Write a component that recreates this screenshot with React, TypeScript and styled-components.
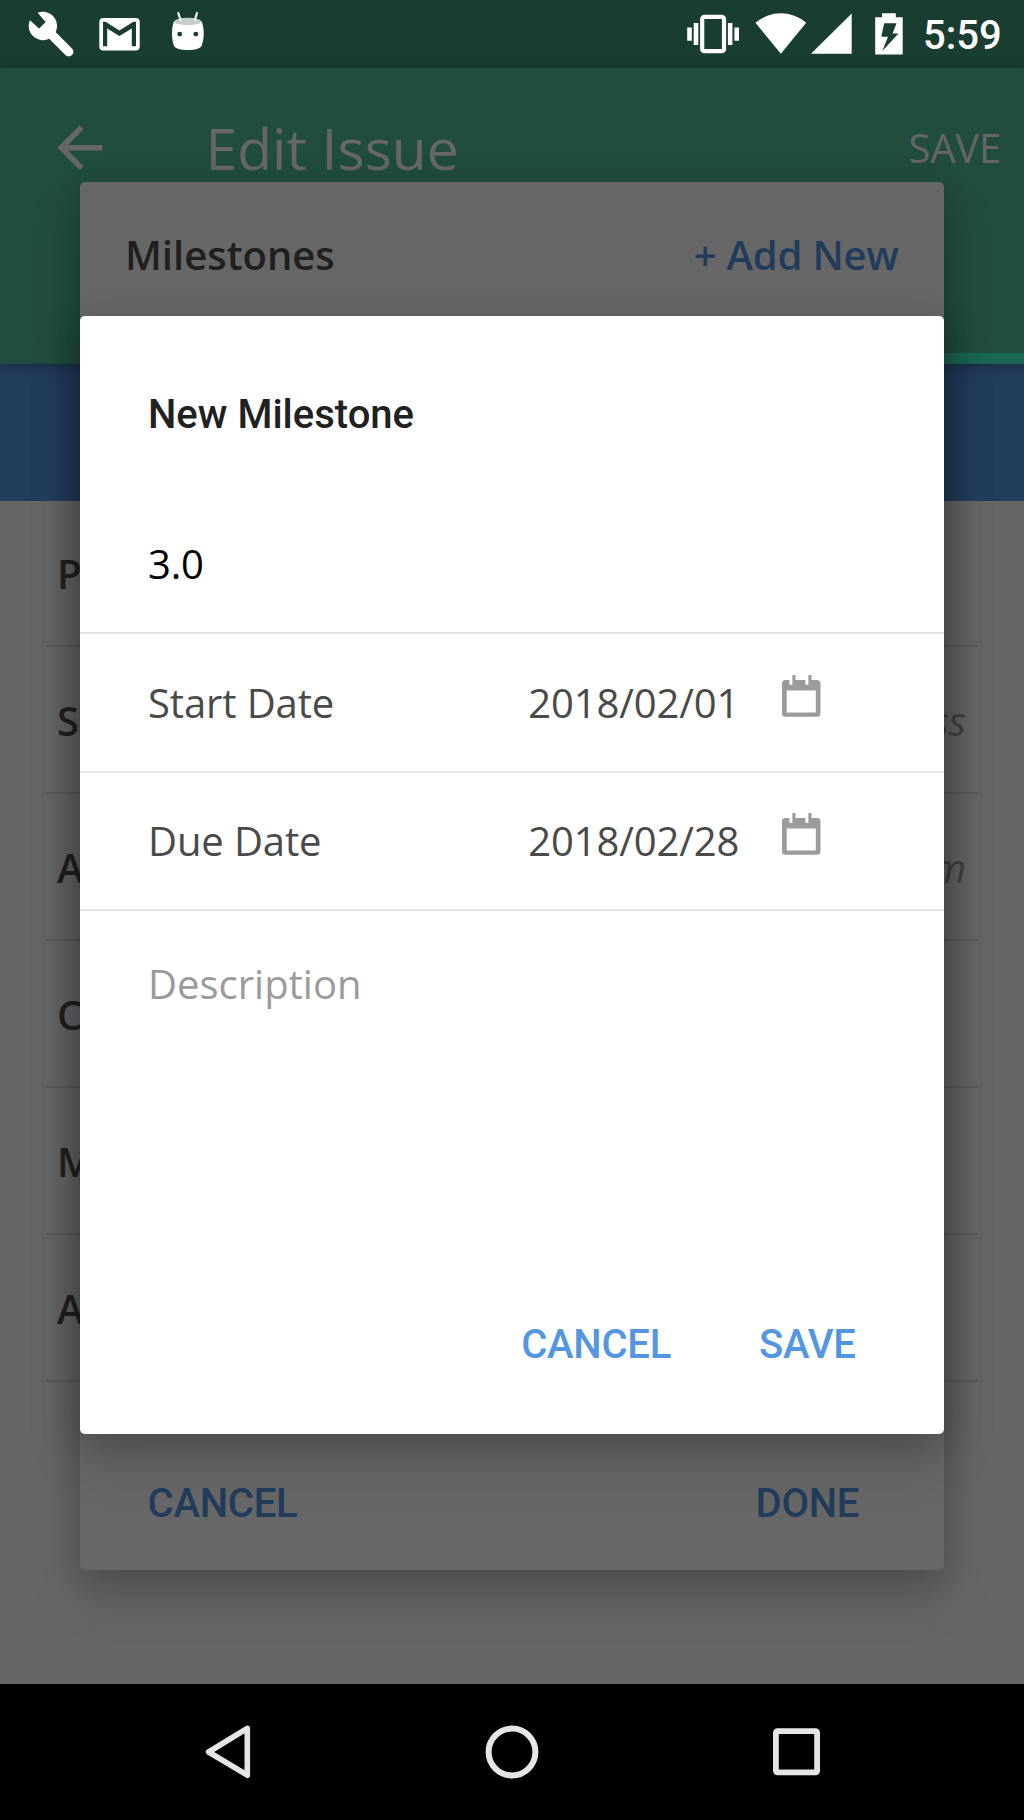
import React from "react";
import styled, { createGlobalStyle } from "styled-components";

const GlobalStyle = createGlobalStyle`
  *, *::before, *::after { box-sizing: border-box; }
  body { margin: 0; background: #000; }
`;

const c = {
  status: "#1a3d32",
  green: "#214d3f",
  accent: "#1a6753",
  band: "#233d5d",
  dim: "#666666",
  dimInk: "#202020",
  dimBlue: "#223c5c",
  ink: "#212121",
  label: "#4a4a4a",
  muted: "#9b9b9b",
  rule: "#e5e5e5",
  link: "#5596e3",
};

const sans = `"Open Sans", "Noto Sans", sans-serif`;
const roboto = `Roboto, "Noto Sans", sans-serif`;

const Screen = styled.div`
  position: relative;
  display: flex;
  flex-direction: column;
  width: 1024px;
  height: 1820px;
  overflow: hidden;
  background: ${c.dim};
  font-family: ${sans};
  font-size: 40px;
  line-height: 54px;
  white-space: nowrap;
`;

const Glyph = styled.svg<{ $gap?: number }>`
  display: block;
  flex: none;
  margin-left: ${(p) => p.$gap ?? 0}px;
`;

const StatusBar = styled.header`
  display: flex;
  justify-content: space-between;
  height: 68px;
  flex: none;
  background: ${c.status};
`;

const StatusGroup = styled.div`
  display: flex;
  align-items: flex-start;
`;

const Clock = styled.time`
  width: 101px;
  margin-left: 17px;
  padding-top: 9px;
  color: #fff;
  font-family: ${roboto};
  font-weight: 500;
`;

const Header = styled.div`
  position: relative;
  display: flex;
  flex-direction: column;
  justify-content: space-between;
  height: 296px;
  flex: none;
  background: ${c.green};
  box-shadow: 0 2px 11px rgba(0, 0, 0, 0.3);
`;

const AppBar = styled.div`
  display: flex;
  align-items: center;
  height: 159px;
  padding: 0 23px 0 46px;
  color: #676767;
`;

const Title = styled.h1`
  flex: 1;
  margin: 0 0 0 92px;
  font-size: 57px;
  font-weight: 400;
  line-height: 78px;
`;

const BarAction = styled.span`
  color: #656565;
  letter-spacing: -0.2px;
`;

const TabIndicator = styled.div`
  align-self: flex-end;
  width: 50%;
  height: 11px;
  background: ${c.accent};
`;

const Band = styled.div`
  height: 137px;
  flex: none;
  background: ${c.band};
`;

const FieldList = styled.ul`
  flex: 1;
  margin: -1px 46px 0;
  padding: 0;
  list-style: none;
`;

const FieldItem = styled.li`
  display: flex;
  align-items: center;
  justify-content: space-between;
  height: 147px;
  padding: 2px 12px 0 11px;
  border-bottom: 2px solid #5b5b5b;
`;

const FieldName = styled.span`
  color: #222;
  font-weight: 600;
`;

const FieldValue = styled.em`
  color: #424242;
`;

const NavBar = styled.nav`
  position: relative;
  z-index: 3;
  display: flex;
  align-items: center;
  justify-content: center;
  gap: 230px;
  height: 136px;
  flex: none;
  background: #000;
`;

const Sheet = styled.section<{ $top: number; $height: number; $front?: boolean }>`
  position: absolute;
  z-index: ${(p) => (p.$front ? 2 : 1)};
  top: ${(p) => p.$top}px;
  left: 79.6px;
  display: flex;
  flex-direction: column;
  width: 864.6px;
  height: ${(p) => p.$height}px;
  border-radius: 5px;
  background: ${(p) => (p.$front ? "#fff" : "#676767")};
  box-shadow: 0 24px 50px rgba(0, 0, 0, 0.22), 0 2px 28px rgba(0, 0, 0, 0.1);
`;

const SheetHeader = styled.div`
  display: flex;
  align-items: center;
  justify-content: space-between;
  height: 146px;
  padding: 0 45.4px;
  font-weight: 600;
`;

const SheetTitle = styled.span`
  color: ${c.dimInk};
`;

const AddNew = styled.span`
  color: ${c.dimBlue};
  letter-spacing: -0.2px;
`;

const SheetFooter = styled.div`
  display: flex;
  align-items: center;
  justify-content: space-between;
  height: 132px;
  margin-top: auto;
  padding: 0 85px 0 68px;
`;

const TextButton = styled.button<{ $dim?: boolean }>`
  padding: 0;
  border: 0;
  background: none;
  color: ${(p) => (p.$dim ? c.dimBlue : c.link)};
  font: 500 40px/54px ${roboto};
  letter-spacing: -0.25px;
`;

const DialogTitle = styled.h2`
  display: flex;
  align-items: center;
  height: 196px;
  margin: 0;
  padding: 2px 0 0 68.4px;
  color: ${c.ink};
  font: 500 40px/54px ${roboto};
`;

const DialogRow = styled.div<{ $height: number; $lift?: number }>`
  display: flex;
  align-items: center;
  height: ${(p) => p.$height}px;
  padding: 0 123px ${(p) => p.$lift ?? 0}px 68.4px;
  border-bottom: 2px solid ${c.rule};
  color: ${c.label};
  letter-spacing: -0.12px;
`;

const NameValue = styled.span`
  color: #000;
`;

const RowLabel = styled.span`
  flex: 1;
`;

const DateValue = styled.span`
  width: 254px;
`;

const CalendarSlot = styled.span`
  padding-bottom: 13px;
`;

const Description = styled.div`
  flex: 1;
  padding: 46px 68.4px 0;
  color: ${c.muted};
`;

const DialogActions = styled.div`
  display: flex;
  align-items: center;
  justify-content: flex-end;
  gap: 88px;
  height: 178px;
  padding-right: 88.6px;
`;

const CalendarIcon = () => (
  <CalendarSlot>
    <Glyph width="39" height="43" viewBox="0 0 39 43">
      <path
        fill={c.muted}
        fillRule="evenodd"
        d="M3.5 5H7.4V9.7H10.4V0H13.5V5H23.4V9.7H26.4V0H29.5V5H35A3.5 3.5 0 0 1 38.5 8.5V38.2A3.5 3.5 0 0 1 35 41.7H3.5A3.5 3.5 0 0 1 0 38.2V8.5A3.5 3.5 0 0 1 3.5 5ZM4.7 15.4V37.4H33.8V15.4Z"
      />
    </Glyph>
  </CalendarSlot>
);

const fields: { name: string; value?: string }[] = [
  { name: "P" },
  { name: "S", value: "ss" },
  { name: "A", value: "m" },
  { name: "C" },
  { name: "M" },
  { name: "A" },
];

const dates = [
  { label: "Start Date", value: "2018/02/01", height: 139 },
  { label: "Due Date", value: "2018/02/28", height: 138 },
];

export default function App() {
  return (
    <>
      <GlobalStyle />
      <Screen>
        <StatusBar>
          <StatusGroup>
            <Glyph $gap={28} width="48" height="68" viewBox="28 0 48 68">
              <path d="M48 31L68.7 51.7" stroke="#fff" strokeWidth="9.4" strokeLinecap="round" />
              <path d="M37.6 12.8A14.2 14.2 0 1 1 29.9 20.2L39.1 28.4L45.7 22.1Z" fill="#fff" />
            </Glyph>
            <Glyph $gap={22} width="44" height="68" viewBox="98 0 44 68">
              <rect x="99.3" y="18" width="40.4" height="32.6" rx="4" fill="#fff" />
              <path d="M103 46.3V21.7H105.6L119.4 30.6L133.4 21.7H136V46.3H131.8V28.5L119.4 36L107.2 28.5V46.3Z" fill={c.status} />
            </Glyph>
            <Glyph $gap={28} width="36" height="68" viewBox="170 0 36 68">
              <path d="M173.8 21.5C171.4 29 171.4 38 173.8 45.5C175.5 51.6 200 51.6 201.8 45.5C204.4 38 204.4 29 201.8 21.5Z" fill="#fff" />
              <ellipse cx="187.8" cy="21.5" rx="13.6" ry="3.7" fill="#c4cfcc" />
              <path d="M178.3 13L180.6 20M197 13L194.8 20" stroke="#f2f5f4" strokeWidth="2.2" strokeLinecap="round" />
              <circle cx="179.7" cy="34.1" r="2.4" fill={c.status} />
              <circle cx="195.8" cy="34.1" r="2.4" fill={c.status} />
            </Glyph>
          </StatusGroup>
          <StatusGroup>
            <Glyph width="54" height="68" viewBox="686 0 54 68">
              <rect x="702.2" y="16.8" width="21.8" height="34.3" rx="2.2" fill="none" stroke="#fff" strokeWidth="4.2" />
              <path d="M693.7 23H698.3V45H693.7ZM687.2 27.4H691.8V40.8H687.2ZM727.9 23H732.4V45H727.9ZM734.4 27.4H739V40.8H734.4Z" fill="#fff" />
            </Glyph>
            <Glyph $gap={14} width="54" height="68" viewBox="754 0 54 68">
              <path d="M755.5 22.8A38.6 38.6 0 0 1 806.2 22.8L780.8 53.8Z" fill="#fff" />
            </Glyph>
            <Glyph $gap={2} width="44" height="68" viewBox="810 0 44 68">
              <path d="M811 53.8L851.7 13.5V53.8Z" fill="#fff" />
            </Glyph>
            <Glyph $gap={20} width="32" height="68" viewBox="874 0 32 68">
              <path d="M882 13.2H895.8V17.2H902.7V54.6H875.2V17.2H882Z" fill="#fff" />
              <path d="M884.2 23.2H896.5L892.6 33.4H898.5L882.3 51L888 36.8H881.3Z" fill={c.status} />
            </Glyph>
            <Clock>5:59</Clock>
          </StatusGroup>
        </StatusBar>

        <Header>
          <AppBar>
            <Glyph width="67.5" height="67.5" viewBox="0 0 24 24">
              <path fill="currentColor" d="M20 11H7.83l5.59-5.59L12 4l-8 8 8 8 1.41-1.41L7.83 13H20v-2z" />
            </Glyph>
            <Title>Edit Issue</Title>
            <BarAction>SAVE</BarAction>
          </AppBar>
          <TabIndicator />
        </Header>
        <Band />

        <FieldList>
          {fields.map((f, i) => (
            <FieldItem key={i}>
              <FieldName>{f.name}</FieldName>
              {f.value && <FieldValue>{f.value}</FieldValue>}
            </FieldItem>
          ))}
        </FieldList>

        <Sheet $top={182} $height={1388}>
          <SheetHeader>
            <SheetTitle>Milestones</SheetTitle>
            <AddNew>+ Add New</AddNew>
          </SheetHeader>
          <SheetFooter>
            <TextButton $dim>CANCEL</TextButton>
            <TextButton $dim>DONE</TextButton>
          </SheetFooter>
        </Sheet>

        <Sheet $top={316.4} $height={1117.8} $front>
          <DialogTitle>New Milestone</DialogTitle>
          <DialogRow $height={122} $lift={16}>
            <NameValue>3.0</NameValue>
          </DialogRow>
          {dates.map((d) => (
            <DialogRow key={d.label} $height={d.height}>
              <RowLabel>{d.label}</RowLabel>
              <DateValue>{d.value}</DateValue>
              <CalendarIcon />
            </DialogRow>
          ))}
          <Description>Description</Description>
          <DialogActions>
            <TextButton>CANCEL</TextButton>
            <TextButton>SAVE</TextButton>
          </DialogActions>
        </Sheet>

        <NavBar>
          <Glyph width="54" height="56" viewBox="0 0 54 56">
            <path d="M46.3 4.4L7.6 28L46.3 51.2Z" fill="none" stroke="#e6e6e6" strokeWidth="5.6" strokeLinejoin="round" />
          </Glyph>
          <Glyph width="54" height="56" viewBox="0 0 54 56">
            <circle cx="27" cy="28" r="23.4" fill="none" stroke="#e6e6e6" strokeWidth="6" />
          </Glyph>
          <Glyph width="54" height="56" viewBox="0 0 54 56">
            <rect x="6.9" y="7.2" width="41.2" height="41.2" rx="1.6" fill="none" stroke="#e6e6e6" strokeWidth="5.8" />
          </Glyph>
        </NavBar>
      </Screen>
    </>
  );
}
